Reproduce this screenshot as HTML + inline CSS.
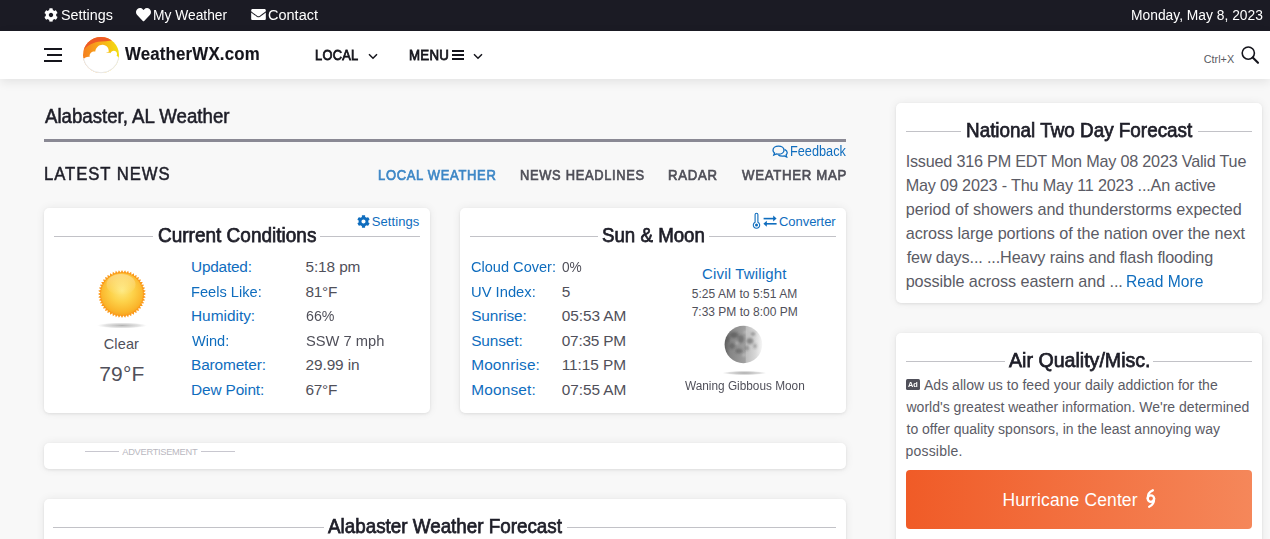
<!DOCTYPE html>
<html><head><meta charset="utf-8"><title>Alabaster, AL Weather</title>
<style>
html,body{margin:0;padding:0;}
body{width:1270px;height:539px;overflow:hidden;position:relative;background:#f8f8f8;font-family:"Liberation Sans",sans-serif;}
.t{position:absolute;line-height:40px;white-space:nowrap;}
.a{position:absolute;}
.card{position:absolute;background:#fff;border-radius:5px;box-shadow:0 0 10px rgba(0,0,0,0.07),0 1px 3px rgba(0,0,0,0.08);}
.hl{position:absolute;height:1px;background:#c2c2c7;}
</style></head><body>
<div class='a' style='left:0;top:0;width:1270px;height:31px;background:#1b1b24'></div>
<svg class='a' style='left:44px;top:8px' width='14' height='14' viewBox='0 0 512 512'><path fill='#fff' d='M487.4 315.7l-42.6-24.6c4.3-23.2 4.3-47 0-70.2l42.6-24.6c4.9-2.8 7.1-8.6 5.5-14-11.1-35.6-30-67.8-54.7-94.6-3.8-4.1-10-5.1-14.8-2.3L380.8 110c-17.9-15.4-38.5-27.3-60.8-35.1V25.8c0-5.6-3.9-10.5-9.4-11.7-36.7-8.2-74.3-7.8-109.2 0-5.5 1.2-9.4 6.1-9.4 11.7V75c-22.2 7.9-42.8 19.8-60.8 35.1L88.7 85.5c-4.9-2.8-11-1.9-14.8 2.3-24.7 26.7-43.6 58.9-54.7 94.6-1.7 5.4.6 11.2 5.5 14L67.3 221c-4.3 23.2-4.3 47 0 70.2l-42.6 24.6c-4.9 2.8-7.1 8.6-5.5 14 11.1 35.6 30 67.8 54.7 94.6 3.8 4.1 10 5.1 14.8 2.3l42.6-24.6c17.9 15.4 38.5 27.3 60.8 35.1v49.2c0 5.6 3.9 10.5 9.4 11.7 36.7 8.2 74.3 7.8 109.2 0 5.5-1.2 9.4-6.1 9.4-11.7v-49.2c22.2-7.9 42.8-19.8 60.8-35.1l42.6 24.6c4.9 2.8 11 1.9 14.8-2.3 24.7-26.7 43.6-58.9 54.7-94.6 1.5-5.5-.7-11.3-5.6-14.1zM256 336c-44.1 0-80-35.9-80-80s35.9-80 80-80 80 35.9 80 80-35.9 80-80 80z'/></svg>
<svg class='a' style='left:136px;top:8px' width='15' height='14' viewBox='0 0 512 470'><path fill='#fff' d='M462.3 30.6C407.5-16.1 326-7.7 275.7 44.2L256 64.5l-19.7-20.3C186.1-7.7 104.5-16.1 49.7 30.6c-62.8 53.6-66.1 149.8-9.9 207.9l193.5 199.8c12.5 12.9 32.8 12.9 45.3 0l193.5-199.8c56.3-58.1 53-154.3-9.8-207.9z'/></svg>
<svg class='a' style='left:251px;top:9px' width='15' height='11' viewBox='0 0 512 384'><path fill='#fff' d='M502.3 126.8c3.9-3.1 9.7-.2 9.7 4.7V336c0 26.5-21.5 48-48 48H48c-26.5 0-48-21.5-48-48V131.6c0-5 5.7-7.8 9.7-4.7 22.4 17.4 52.1 39.5 154.1 113.6 21.1 15.4 56.7 47.8 92.2 47.6 35.7.3 72-32.8 92.3-47.6 102-74.1 131.6-96.3 154-113.7zM256 256c23.2.4 56.6-29.2 73.4-41.4 132.7-96.3 142.8-104.7 173.4-128.7 5.8-4.5 9.2-11.5 9.2-18.9V48c0-26.5-21.5-48-48-48H48C21.5 0 0 21.5 0 48v19c0 7.4 3.4 14.3 9.2 18.9 30.6 23.9 40.7 32.4 173.4 128.7 16.8 12.2 50.2 41.8 73.4 41.4z'/></svg>
<div class='a' style='left:0;top:31px;width:1270px;height:48px;background:#fff;box-shadow:0 3px 10px rgba(0,0,0,0.09)'></div>
<div class='a' style='left:44px;top:48px;width:18px;height:2px;background:#15151c'></div>
<div class='a' style='left:47px;top:54px;width:15px;height:2px;background:#15151c'></div>
<div class='a' style='left:44px;top:60px;width:18px;height:2px;background:#15151c'></div>
<svg class='a' style='left:82px;top:36px' width='38' height='38' viewBox='-1 -1 38 38'>
<defs><linearGradient id='lg' x1='0' y1='0' x2='1' y2='0'><stop offset='0' stop-color='#f47c20'/><stop offset='0.45' stop-color='#f9a81a'/><stop offset='1' stop-color='#f2e20f'/></linearGradient>
<clipPath id='cc'><circle cx='18' cy='18' r='18'/></clipPath></defs>
<circle cx='18' cy='18' r='18' fill='#fff'/>
<g clip-path='url(#cc)'>
<rect x='-1' y='-1' width='38' height='38' fill='url(#lg)'/>
<path fill='#ee5a26' d='M-1 15 C3 9 10 5 18 4.6 C25 4.3 30 4 37 1.5 L37 -1 L-1 -1 Z'/>
<path fill='#fff' d='M0 22.8 C1.5 20.5 4 19.6 6.6 19.9 C6.2 16.2 9.2 13.9 12.3 14.6 C12.8 10.2 16.5 7.2 20.6 7.9 C24.2 8.4 26.2 11.6 25.6 14.9 C24.6 15 23.6 15.4 23 16 C24.8 15.8 26.4 15.6 27.4 16.2 C28.2 13.6 31.4 12.8 33.2 14.8 C34.2 16 34.2 17.6 33.6 18.8 C35 19.4 36 20.6 36.5 22 L37 37 L-1 37 Z'/>
</g>
<path d='M0.3 21 A18 18 0 0 0 35.7 21' fill='none' stroke='#e6e6e6' stroke-width='0.9'/>
</svg>
<svg class='a' style='left:368px;top:53px' width='10' height='7' viewBox='0 0 10 7'><path d='M1 1.2 L5 5.2 L9 1.2' fill='none' stroke='#15151c' stroke-width='1.5'/></svg>
<svg class='a' style='left:473.2px;top:53px' width='10' height='7' viewBox='0 0 10 7'><path d='M1 1.2 L5 5.2 L9 1.2' fill='none' stroke='#15151c' stroke-width='1.5'/></svg>
<div class='a' style='left:452px;top:50px;width:12px;height:2px;background:#15151c'></div>
<div class='a' style='left:452px;top:54px;width:12px;height:2px;background:#15151c'></div>
<div class='a' style='left:452px;top:58px;width:12px;height:2px;background:#15151c'></div>
<svg class='a' style='left:1240px;top:45px' width='20' height='20' viewBox='0 0 20 20'><circle cx='8.3' cy='8.1' r='6.1' fill='none' stroke='#15151c' stroke-width='1.6'/><path d='M12.7 12.5 L18 17.8' stroke='#15151c' stroke-width='2.1' stroke-linecap='round'/></svg>
<div class='a' style='left:44px;top:139px;width:802px;height:3px;background:#8a8994'></div>
<svg class='a' style='left:772px;top:145px' width='16' height='13' viewBox='0 0 16 13'><path d='M6.5 1.2 C3.3 1.2 1 3 1 5.2 C1 6.3 1.6 7.2 2.5 7.9 L1.8 10 L4.4 8.9 C5.1 9.1 5.8 9.2 6.5 9.2 C9.7 9.2 12 7.4 12 5.2 C12 3 9.7 1.2 6.5 1.2 Z' fill='none' stroke='#0f6dbe' stroke-width='1.3'/><path d='M12.6 4.3 C14.2 5 15.2 6.2 15.2 7.6 C15.2 8.5 14.8 9.3 14.1 9.9 L14.7 12 L12.3 10.9 C11.6 11.1 11 11.2 10.3 11.2 C8.7 11.2 7.3 10.7 6.4 9.9' fill='none' stroke='#0f6dbe' stroke-width='1.3'/></svg>
<div class='card' style='left:44px;top:208px;width:386px;height:205px'></div>
<div class='hl' style='left:54px;top:236px;width:99px'></div>
<div class='hl' style='left:320px;top:236px;width:100px'></div>
<svg class='a' style='left:356.5px;top:214.5px' width='13' height='13' viewBox='0 0 512 512'><path fill='#0f6dbe' d='M487.4 315.7l-42.6-24.6c4.3-23.2 4.3-47 0-70.2l42.6-24.6c4.9-2.8 7.1-8.6 5.5-14-11.1-35.6-30-67.8-54.7-94.6-3.8-4.1-10-5.1-14.8-2.3L380.8 110c-17.900-15.4-38.5-27.3-60.8-35.1V25.8c0-5.6-3.9-10.5-9.4-11.700-36.7-8.2-74.3-7.8-109.2 0-5.5 1.2-9.4 6.1-9.4 11.7V75c-22.2 7.9-42.8 19.8-60.8 35.1L88.7 85.5c-4.9-2.8-11-1.9-14.8 2.3-24.7 26.7-43.6 58.9-54.7 94.6-1.7 5.4.6 11.2 5.5 14L67.3 221c-4.3 23.2-4.300 47 0 70.2l-42.6 24.6c-4.9 2.8-7.1 8.6-5.5 14 11.1 35.6 30 67.8 54.7 94.6 3.8 4.1 10 5.1 14.8 2.3l42.6-24.6c17.9 15.4 38.5 27.3 60.8 35.1v49.2c0 5.6 3.9 10.5 9.4 11.7 36.7 8.2 74.3 7.8 109.2 0 5.5-1.2 9.4-6.1 9.4-11.7v-49.2c22.2-7.9 42.8-19.8 60.8-35.1l42.6 24.6c4.9 2.8 11 1.9 14.8-2.3 24.7-26.7 43.6-58.9 54.7-94.6 1.5-5.5-.7-11.3-5.6-14.1zM256 336c-44.1 0-80-35.9-80-80s35.9-80 80-80 80 35.9 80 80-35.9 80-80 80z'/></svg>
<svg class='a' style='left:94px;top:266px' width='56' height='66' viewBox='0 0 56 66'>
<defs><radialGradient id='sg' cx='0.5' cy='0.42' r='0.6'><stop offset='0' stop-color='#fee97e'/><stop offset='0.45' stop-color='#fdd24a'/><stop offset='0.85' stop-color='#fab52b'/><stop offset='1' stop-color='#f8a21f'/></radialGradient>
<linearGradient id='hg' x1='0' y1='0' x2='0' y2='1'><stop offset='0' stop-color='#fff' stop-opacity='0.35'/><stop offset='1' stop-color='#fff' stop-opacity='0'/></linearGradient>
<radialGradient id='sh' cx='0.5' cy='0.5' r='0.5'><stop offset='0' stop-color='#999' stop-opacity='0.75'/><stop offset='0.7' stop-color='#b0b0b0' stop-opacity='0.35'/><stop offset='1' stop-color='#ccc' stop-opacity='0'/></radialGradient></defs>
<polygon points='28.00,4.00 29.41,6.45 31.13,4.21 32.21,6.82 34.21,4.82 34.94,7.55 37.18,5.83 37.55,8.63 40.00,7.22 40.00,10.04 42.61,8.96 42.24,11.76 44.97,11.03 44.24,13.76 47.04,13.39 45.96,16.00 48.78,16.00 47.37,18.45 50.17,18.82 48.45,21.06 51.18,21.79 49.18,23.79 51.79,24.87 49.55,26.59 52.00,28.00 49.55,29.41 51.79,31.13 49.18,32.21 51.18,34.21 48.45,34.94 50.17,37.18 47.37,37.55 48.78,40.00 45.96,40.00 47.04,42.61 44.24,42.24 44.97,44.97 42.24,44.24 42.61,47.04 40.00,45.96 40.00,48.78 37.55,47.37 37.18,50.17 34.94,48.45 34.21,51.18 32.21,49.18 31.13,51.79 29.41,49.55 28.00,52.00 26.59,49.55 24.87,51.79 23.79,49.18 21.79,51.18 21.06,48.45 18.82,50.17 18.45,47.37 16.00,48.78 16.00,45.96 13.39,47.04 13.76,44.24 11.03,44.97 11.76,42.24 8.96,42.61 10.04,40.00 7.22,40.00 8.63,37.55 5.83,37.18 7.55,34.94 4.82,34.21 6.82,32.21 4.21,31.13 6.45,29.41 4.00,28.00 6.45,26.59 4.21,24.87 6.82,23.79 4.82,21.79 7.55,21.06 5.83,18.82 8.63,18.45 7.22,16.00 10.04,16.00 8.96,13.39 11.76,13.76 11.03,11.03 13.76,11.76 13.39,8.96 16.00,10.04 16.00,7.22 18.45,8.63 18.82,5.83 21.06,7.55 21.79,4.82 23.79,6.82 24.87,4.21 26.59,6.45' fill='#fb9a1a'/>
<circle cx='28' cy='28' r='21' fill='url(#sg)'/>
<ellipse cx='27' cy='18.5' rx='14.5' ry='10.5' fill='url(#hg)'/>
<ellipse cx='28' cy='59.5' rx='25' ry='3' fill='url(#sh)'/>
</svg>
<div class='card' style='left:460px;top:208px;width:386px;height:205px'></div>
<div class='hl' style='left:470px;top:236px;width:128px'></div>
<div class='hl' style='left:708.5px;top:236px;width:127.5px'></div>
<svg class='a' style='left:752px;top:212px' width='26' height='17' viewBox='0 0 26 17'>
<path d='M3.1 10.2 V2.6 a1.4 1.4 0 0 1 2.8 0 V10.2 a3.2 3.2 0 1 1 -2.8 0 Z' fill='none' stroke='#0f6dbe' stroke-width='1.1'/><circle cx='4.5' cy='12.9' r='1.5' fill='#0f6dbe'/>
<path d='M11.6 6.6 H22' fill='none' stroke='#0f6dbe' stroke-width='1.6'/><path d='M21.2 3.6 L24.6 6.6 L21.2 9.6 Z' fill='#0f6dbe'/>
<path d='M24.6 11.8 H14' fill='none' stroke='#0f6dbe' stroke-width='1.6'/><path d='M14.8 8.8 L11.4 11.8 L14.8 14.8 Z' fill='#0f6dbe'/>
</svg>
<svg class='a' style='left:720px;top:322px' width='48' height='56' viewBox='0 0 48 56'>
<defs><linearGradient id='mg' x1='0' y1='0' x2='1' y2='0'><stop offset='0' stop-color='#5e5e5e'/><stop offset='0.15' stop-color='#858585'/><stop offset='0.55' stop-color='#a0a0a0'/><stop offset='0.57' stop-color='#bdbdbd'/><stop offset='0.82' stop-color='#d8d8d8'/><stop offset='1' stop-color='#f6f6f6'/></linearGradient>
<radialGradient id='mh' cx='0.5' cy='0.5' r='0.5'><stop offset='0' stop-color='#8f8f8f' stop-opacity='0.8'/><stop offset='0.7' stop-color='#aaa' stop-opacity='0.4'/><stop offset='1' stop-color='#ccc' stop-opacity='0'/></radialGradient>
<filter id='bl' x='-20%' y='-20%' width='140%' height='140%'><feGaussianBlur stdDeviation='1.1'/></filter>
<clipPath id='mc'><circle cx='23.4' cy='22.5' r='18.8'/></clipPath></defs>
<circle cx='23.4' cy='22.5' r='18.8' fill='url(#mg)'/>
<g clip-path='url(#mc)'><g filter='url(#bl)' fill='#3c3c3c'>
<ellipse cx='14' cy='13' rx='4.5' ry='3' opacity='0.45'/><ellipse cx='21' cy='17' rx='3' ry='4' opacity='0.4'/><ellipse cx='30' cy='19' rx='3.5' ry='3' opacity='0.45'/>
<ellipse cx='12' cy='24' rx='3' ry='3' opacity='0.35'/><ellipse cx='19' cy='29' rx='3.5' ry='2.5' opacity='0.4'/><ellipse cx='33' cy='12' rx='2.5' ry='2' opacity='0.35'/>
<ellipse cx='27' cy='26' rx='2' ry='2.5' opacity='0.35'/><ellipse cx='8' cy='17' rx='2' ry='3.5' opacity='0.3'/><ellipse cx='35' cy='24' rx='2' ry='2.5' opacity='0.3'/>
</g><g filter='url(#bl)' fill='#fff'><circle cx='17' cy='21' r='1.6' opacity='0.35'/><circle cx='25' cy='10' r='1.5' opacity='0.3'/><circle cx='24' cy='33' r='1.8' opacity='0.3'/></g></g>
<ellipse cx='24.4' cy='51' rx='22.5' ry='2.2' fill='url(#mh)'/>
</svg>
<div class='card' style='left:44px;top:443px;width:802px;height:26px'></div>
<div class='hl' style='left:85px;top:451px;width:34px;background:#c8c7cf'></div>
<div class='hl' style='left:201px;top:451px;width:34px;background:#c8c7cf'></div>
<div class='card' style='left:44px;top:499px;width:802px;height:80px'></div>
<div class='hl' style='left:53px;top:527px;width:271px'></div>
<div class='hl' style='left:566.5px;top:527px;width:269px'></div>
<div class='card' style='left:896px;top:103px;width:366px;height:200px'></div>
<div class='hl' style='left:906px;top:131px;width:55px'></div>
<div class='hl' style='left:1197.5px;top:131px;width:54px'></div>
<div class='card' style='left:896px;top:333px;width:366px;height:240px'></div>
<div class='hl' style='left:906px;top:361px;width:99px'></div>
<div class='hl' style='left:1153px;top:361px;width:99px'></div>
<div class='a' style='left:906px;top:379px;width:14px;height:11px;background:#50505a;border-radius:1.5px'></div>
<div class='a' style='left:906px;top:470px;width:346px;height:58.5px;border-radius:4px;background:linear-gradient(90deg,#f05b27,#f5875a)'></div>
<svg class='a' style='left:1145px;top:489px' width='12' height='19' viewBox='0 0 12 19'><circle cx='5.9' cy='9.6' r='3.2' fill='none' stroke='#fff' stroke-width='2.3'/><path d='M7.8 1.3 C4.6 2.5 2.7 5.6 2.7 9.6 M9.1 9.6 C9.1 13.6 7.3 16.6 4.2 17.8' fill='none' stroke='#fff' stroke-width='2.3' stroke-linecap='round'/></svg>
<div class='t' style='left:60.77px;top:-5.00px;font-size:15.4px;font-weight:400;color:#fff;transform:scaleX(0.9315);transform-origin:0 0;'>Settings</div>
<div class='t' style='left:153.10px;top:-5.00px;font-size:15.4px;font-weight:400;color:#fff;transform:scaleX(0.8963);transform-origin:0 0;'>My Weather</div>
<div class='t' style='left:268.06px;top:-5.00px;font-size:15.4px;font-weight:400;color:#fff;transform:scaleX(0.9423);transform-origin:0 0;'>Contact</div>
<div class='t' style='left:1130.90px;top:-5.00px;font-size:15.4px;font-weight:400;color:#fff;transform:scaleX(0.8979);transform-origin:0 0;'>Monday, May 8, 2023</div>
<div class='t' style='left:125.00px;top:34.00px;font-size:18.8px;font-weight:700;color:#15151c;transform:scaleX(0.8960);transform-origin:0 0;letter-spacing:0.2px;-webkit-text-stroke:0.15px #15151c'>WeatherWX.com</div>
<div class='t' style='left:314.92px;top:35.00px;font-size:14.6px;font-weight:400;color:#15151c;transform:scaleX(0.8792);transform-origin:0 0;letter-spacing:0.3px;-webkit-text-stroke:0.8px #15151c'>LOCAL</div>
<div class='t' style='left:408.89px;top:35.00px;font-size:14.6px;font-weight:400;color:#15151c;transform:scaleX(0.9095);transform-origin:0 0;letter-spacing:0.3px;-webkit-text-stroke:0.8px #15151c'>MENU</div>
<div class='t' style='left:1203.80px;top:39.00px;font-size:10.8px;font-weight:400;color:#5a5a62;'>Ctrl+X</div>
<div class='t' style='left:44.50px;top:96.00px;font-size:19.5px;font-weight:400;color:#1e1e28;transform:scaleX(0.9560);transform-origin:0 0;-webkit-text-stroke:0.55px #1e1e28'>Alabaster, AL Weather</div>
<div class='t' style='left:790.09px;top:131.00px;font-size:14px;font-weight:400;color:#0f6dbe;transform:scaleX(0.9100);transform-origin:0 0;'>Feedback</div>
<div class='t' style='left:43.57px;top:154.00px;font-size:18px;font-weight:400;color:#1e1e28;transform:scaleX(0.9276);transform-origin:0 0;letter-spacing:1px;-webkit-text-stroke:0.5px #1e1e28'>LATEST NEWS</div>
<div class='t' style='left:378.04px;top:155.00px;font-size:15px;font-weight:400;color:#3d87c6;transform:scaleX(0.8644);transform-origin:0 0;letter-spacing:0.8px;-webkit-text-stroke:0.7px #3d87c6'>LOCAL WEATHER</div>
<div class='t' style='left:520.34px;top:155.00px;font-size:15px;font-weight:400;color:#4f4f58;transform:scaleX(0.8587);transform-origin:0 0;letter-spacing:0.8px;-webkit-text-stroke:0.7px #4f4f58'>NEWS HEADLINES</div>
<div class='t' style='left:668.12px;top:155.00px;font-size:15px;font-weight:400;color:#4f4f58;transform:scaleX(0.8778);transform-origin:0 0;letter-spacing:0.8px;-webkit-text-stroke:0.7px #4f4f58'>RADAR</div>
<div class='t' style='left:741.60px;top:155.00px;font-size:15px;font-weight:400;color:#4f4f58;transform:scaleX(0.8805);transform-origin:0 0;letter-spacing:0.8px;-webkit-text-stroke:0.7px #4f4f58'>WEATHER MAP</div>
<div class='t' style='left:157.50px;top:215.00px;font-size:21px;font-weight:400;color:#1e1e28;transform:scaleX(0.9046);transform-origin:0 0;-webkit-text-stroke:0.75px #1e1e28'>Current Conditions</div>
<div class='t' style='left:371.70px;top:202.00px;font-size:13px;font-weight:400;color:#0f6dbe;letter-spacing:0.100px;'>Settings</div>
<div class='t' style='left:103.70px;top:324.00px;font-size:14.5px;font-weight:400;color:#50505a;letter-spacing:0.150px;'>Clear</div>
<div class='t' style='left:99.30px;top:354.00px;font-size:21px;font-weight:400;color:#50505a;letter-spacing:0.133px;'>79°F</div>
<div class='t' style='left:191.00px;top:247.00px;font-size:15.4px;font-weight:400;color:#0f6dbe;letter-spacing:-0.214px;'>Updated:</div>
<div class='t' style='left:305.50px;top:247.00px;font-size:15.4px;font-weight:400;color:#50505a;letter-spacing:-0.117px;'>5:18 pm</div>
<div class='t' style='left:191.05px;top:272.00px;font-size:15.4px;font-weight:400;color:#0f6dbe;transform:scaleX(0.9514);transform-origin:0 0;'>Feels Like:</div>
<div class='t' style='left:305.50px;top:272.00px;font-size:15.4px;font-weight:400;color:#50505a;letter-spacing:-0.267px;'>81°F</div>
<div class='t' style='left:191.00px;top:296.00px;font-size:15.4px;font-weight:400;color:#0f6dbe;'>Humidity:</div>
<div class='t' style='left:305.58px;top:296.00px;font-size:15.4px;font-weight:400;color:#50505a;transform:scaleX(0.9241);transform-origin:0 0;'>66%</div>
<div class='t' style='left:192.00px;top:321.00px;font-size:15.4px;font-weight:400;color:#0f6dbe;transform:scaleX(0.9474);transform-origin:0 0;'>Wind:</div>
<div class='t' style='left:305.55px;top:321.00px;font-size:15.4px;font-weight:400;color:#50505a;transform:scaleX(0.9537);transform-origin:0 0;'>SSW 7 mph</div>
<div class='t' style='left:191.00px;top:345.00px;font-size:15.4px;font-weight:400;color:#0f6dbe;letter-spacing:-0.133px;'>Barometer:</div>
<div class='t' style='left:305.50px;top:345.00px;font-size:15.4px;font-weight:400;color:#50505a;letter-spacing:-0.086px;'>29.99 in</div>
<div class='t' style='left:191.00px;top:370.00px;font-size:15.4px;font-weight:400;color:#0f6dbe;letter-spacing:-0.133px;'>Dew Point:</div>
<div class='t' style='left:305.50px;top:370.00px;font-size:15.4px;font-weight:400;color:#50505a;letter-spacing:-0.267px;'>67°F</div>
<div class='t' style='left:601.61px;top:215.00px;font-size:21px;font-weight:400;color:#1e1e28;transform:scaleX(0.8904);transform-origin:0 0;-webkit-text-stroke:0.75px #1e1e28'>Sun &amp; Moon</div>
<div class='t' style='left:779.00px;top:202.00px;font-size:13px;font-weight:400;color:#0f6dbe;letter-spacing:-0.050px;'>Converter</div>
<div class='t' style='left:471.25px;top:247.00px;font-size:15.4px;font-weight:400;color:#0f6dbe;transform:scaleX(0.9466);transform-origin:0 0;'>Cloud Cover:</div>
<div class='t' style='left:561.81px;top:247.00px;font-size:15.4px;font-weight:400;color:#50505a;transform:scaleX(0.8905);transform-origin:0 0;'>0%</div>
<div class='t' style='left:471.24px;top:272.00px;font-size:15.4px;font-weight:400;color:#0f6dbe;transform:scaleX(0.9585);transform-origin:0 0;'>UV Index:</div>
<div class='t' style='left:561.70px;top:272.00px;font-size:15.4px;font-weight:400;color:#50505a;'>5</div>
<div class='t' style='left:471.20px;top:296.00px;font-size:15.4px;font-weight:400;color:#0f6dbe;letter-spacing:-0.129px;'>Sunrise:</div>
<div class='t' style='left:561.70px;top:296.00px;font-size:15.4px;font-weight:400;color:#50505a;letter-spacing:-0.057px;'>05:53 AM</div>
<div class='t' style='left:471.20px;top:321.00px;font-size:15.4px;font-weight:400;color:#0f6dbe;letter-spacing:-0.100px;'>Sunset:</div>
<div class='t' style='left:561.70px;top:321.00px;font-size:15.4px;font-weight:400;color:#50505a;letter-spacing:-0.200px;'>07:35 PM</div>
<div class='t' style='left:471.20px;top:345.00px;font-size:15.4px;font-weight:400;color:#0f6dbe;letter-spacing:0.137px;'>Moonrise:</div>
<div class='t' style='left:561.70px;top:345.00px;font-size:15.4px;font-weight:400;color:#50505a;letter-spacing:-0.057px;'>11:15 PM</div>
<div class='t' style='left:471.20px;top:370.00px;font-size:15.4px;font-weight:400;color:#0f6dbe;letter-spacing:0.186px;'>Moonset:</div>
<div class='t' style='left:561.70px;top:370.00px;font-size:15.4px;font-weight:400;color:#50505a;letter-spacing:-0.057px;'>07:55 AM</div>
<div class='t' style='left:702.00px;top:254.00px;font-size:15px;font-weight:400;color:#0f6dbe;letter-spacing:0.169px;'>Civil Twilight</div>
<div class='t' style='left:691.70px;top:274.00px;font-size:12px;font-weight:400;color:#50505a;letter-spacing:0.053px;'>5:25 AM to 5:51 AM</div>
<div class='t' style='left:691.70px;top:292.00px;font-size:12px;font-weight:400;color:#50505a;letter-spacing:-0.006px;'>7:33 PM to 8:00 PM</div>
<div class='t' style='left:684.90px;top:366.00px;font-size:12.5px;font-weight:400;color:#50505a;transform:scaleX(0.9452);transform-origin:0 0;'>Waning Gibbous Moon</div>
<div class='t' style='left:122.30px;top:432.00px;font-size:9.3px;font-weight:400;color:#b9b8c0;letter-spacing:-0.300px;'>ADVERTISEMENT</div>
<div class='t' style='left:327.90px;top:506.00px;font-size:21px;font-weight:400;color:#1e1e28;transform:scaleX(0.8962);transform-origin:0 0;-webkit-text-stroke:0.75px #1e1e28'>Alabaster Weather Forecast</div>
<div class='t' style='left:965.50px;top:110.00px;font-size:21px;font-weight:400;color:#1e1e28;transform:scaleX(0.8988);transform-origin:0 0;-webkit-text-stroke:0.75px #1e1e28'>National Two Day Forecast</div>
<div class='t' style='left:905.70px;top:141.00px;font-size:16.2px;font-weight:400;color:#5b5b65;letter-spacing:-0.207px;'>Issued 316 PM EDT Mon May 08 2023 Valid Tue</div>
<div class='t' style='left:905.70px;top:165.00px;font-size:16.2px;font-weight:400;color:#5b5b65;letter-spacing:-0.168px;'>May 09 2023 - Thu May 11 2023 ...An active</div>
<div class='t' style='left:905.70px;top:189.00px;font-size:16.2px;font-weight:400;color:#5b5b65;letter-spacing:-0.030px;'>period of showers and thunderstorms expected</div>
<div class='t' style='left:905.70px;top:213.00px;font-size:16.2px;font-weight:400;color:#5b5b65;letter-spacing:-0.056px;'>across large portions of the nation over the next</div>
<div class='t' style='left:906.70px;top:237.00px;font-size:16.2px;font-weight:400;color:#5b5b65;letter-spacing:-0.130px;'>few days... ...Heavy rains and flash flooding</div>
<div class='t' style='left:905.70px;top:261.00px;font-size:16.2px;font-weight:400;color:#5b5b65;letter-spacing:-0.080px;'>possible across eastern and ...</div>
<div class='t' style='left:1126.13px;top:261.00px;font-size:16.2px;font-weight:400;color:#0f6dbe;transform:scaleX(0.9667);transform-origin:0 0;'>Read More</div>
<div class='t' style='left:1009.00px;top:340.00px;font-size:21px;font-weight:400;color:#1e1e28;transform:scaleX(0.9333);transform-origin:0 0;-webkit-text-stroke:0.75px #1e1e28'>Air Quality/Misc.</div>
<div class='t' style='left:908.20px;top:365.00px;font-size:7.8px;font-weight:700;color:#fff;transform:scaleX(0.9400);transform-origin:0 0;'>Ad</div>
<div class='t' style='left:924.00px;top:365.00px;font-size:14px;font-weight:400;color:#5b5b65;letter-spacing:0.023px;'>Ads allow us to feed your daily addiction for the</div>
<div class='t' style='left:906.50px;top:387.00px;font-size:14px;font-weight:400;color:#5b5b65;letter-spacing:0.013px;'>world's greatest weather information. We're determined</div>
<div class='t' style='left:906.50px;top:409.00px;font-size:14px;font-weight:400;color:#5b5b65;letter-spacing:0.002px;'>to offer quality sponsors, in the least annoying way</div>
<div class='t' style='left:905.50px;top:431.00px;font-size:14px;font-weight:400;color:#5b5b65;letter-spacing:0.200px;'>possible.</div>
<div class='t' style='left:1002.50px;top:480.00px;font-size:17.5px;font-weight:400;color:#fff;letter-spacing:0.120px;'>Hurricane Center</div>
</body></html>
